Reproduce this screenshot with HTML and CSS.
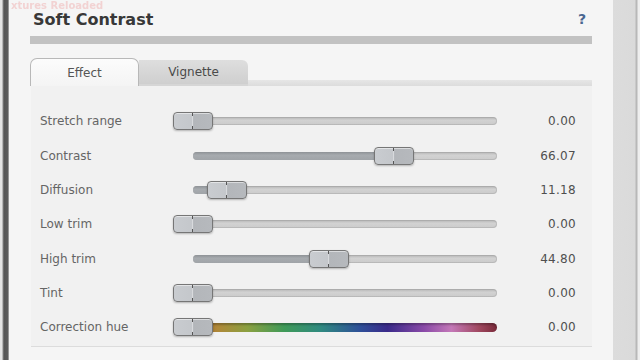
FILE: index.html
```html
<!DOCTYPE html>
<html lang="en">
<head>
  <meta charset="UTF-8">
  <title>Soft Contrast</title>
  <link rel="stylesheet" href="styles.css">
</head>
<body>

<div class="frame">
  <div class="edge-left"></div>

  <div class="dialog">
    <div class="watermark">xtures Reloaded</div>

    <!-- Title -->
    <div class="title-row">
      <h1>Soft Contrast</h1>
      <span class="help">?</span>
    </div>
    <div class="title-bar"></div>

    <!-- Tabs -->
    <div class="tabs">
      <div class="tab active">Effect</div>
      <div class="tab">Vignette</div>
      <div class="tab-line"></div>
    </div>

    <!-- Sliders -->
    <div class="panel">
      <div class="row">
        <span class="label">Stretch range</span>
        <div class="slider" style="--v:0"><div class="track"><div class="fill"></div></div><div class="knob"></div></div>
        <span class="value">0.00</span>
      </div>
      <div class="row">
        <span class="label">Contrast</span>
        <div class="slider" style="--v:66.07"><div class="track"><div class="fill"></div></div><div class="knob"></div></div>
        <span class="value">66.07</span>
      </div>
      <div class="row">
        <span class="label">Diffusion</span>
        <div class="slider" style="--v:11.18"><div class="track"><div class="fill"></div></div><div class="knob"></div></div>
        <span class="value">11.18</span>
      </div>
      <div class="row">
        <span class="label">Low trim</span>
        <div class="slider" style="--v:0"><div class="track"><div class="fill"></div></div><div class="knob"></div></div>
        <span class="value">0.00</span>
      </div>
      <div class="row">
        <span class="label">High trim</span>
        <div class="slider" style="--v:44.8"><div class="track"><div class="fill"></div></div><div class="knob"></div></div>
        <span class="value">44.80</span>
      </div>
      <div class="row">
        <span class="label">Tint</span>
        <div class="slider" style="--v:0"><div class="track"><div class="fill"></div></div><div class="knob"></div></div>
        <span class="value">0.00</span>
      </div>
      <div class="row">
        <span class="label">Correction hue</span>
        <div class="slider" style="--v:0"><div class="track hue"></div><div class="knob"></div></div>
        <span class="value">0.00</span>
      </div>
    </div>
  </div>

  <div class="edge-right"></div>
</div>

</body>
</html>
```

FILE: styles.css
```css
body {
  margin: 0;
  font-family: "DejaVu Sans", Verdana, sans-serif;
  background-color: #f5f5f5;
}

.frame {
  display: flex;
  height: 360px;
  overflow: hidden;
}

.edge-left {
  width: 9px;
  flex-shrink: 0;
  background: linear-gradient(to right, #e4e4e4 0, #e4e4e4 2px, #8a8a8a 3px, #555 4px, #5c5c5c 8px, #cfcfcf 9px);
}

.edge-right {
  width: 27px;
  flex-shrink: 0;
  background: linear-gradient(to right, #dcdcdc 0, #dadada 22px, #b8b8b8 23px, #b8b8b8 24px, #eeeeee 25px);
}

.dialog {
  position: relative;
  flex: 1;
  padding: 0 21px 0 21px;
  background-color: #f5f5f5;
}

.watermark {
  position: absolute;
  left: 2px;
  top: 0;
  font-size: 10px;
  line-height: 12px;
  font-weight: bold;
  color: rgba(235, 130, 130, 0.3);
  filter: blur(0.5px);
}

/* Title */

.title-row {
  display: flex;
  justify-content: space-between;
  align-items: center;
  height: 36px;
  padding: 3px 6px 0 3px;
  box-sizing: border-box;
}

h1 {
  margin: 0;
  font-size: 16px;
  font-weight: bold;
  color: #383838;
}

.help {
  font-size: 14px;
  font-weight: bold;
  color: #4a6690;
  margin-top: -1px;
}

.title-bar {
  height: 8px;
  background-color: #c2c2c2;
}

/* Tabs */

.tabs {
  display: flex;
  align-items: flex-end;
  height: 28px;
  margin-top: 14px;
}

.tab {
  width: 109px;
  height: 24px;
  display: flex;
  align-items: center;
  justify-content: center;
  font-size: 12px;
  color: #4a4a4a;
  background: linear-gradient(#dedede, #cfcfcf);
  border-top-right-radius: 6px;
  border-bottom: 2px solid #d6d6d6;
}

.tab.active {
  width: 107px;
  height: 27px;
  color: #555;
  background: linear-gradient(#fcfcfc, #f4f4f4);
  border: 1px solid #b8b8b8;
  border-bottom: none;
  border-radius: 7px 7px 0 0;
}

.tab-line {
  flex: 1;
  height: 6px;
  background: linear-gradient(#e6e6e6, #dcdcdc);
}

/* Slider panel */

.panel {
  padding: 18px 0 2px 0;
  background-color: #f1f1f1;
  border-bottom: 1px solid #dcdcdc;
  margin-left: 1px;
}

.row {
  display: flex;
  align-items: center;
  height: 34.35px;
}

.label {
  width: 133px;
  padding-left: 9px;
  font-size: 12px;
  color: #656565;
}

.slider {
  position: relative;
  width: 344px;
  height: 20px;
  display: flex;
  align-items: center;
}

.track {
  position: relative;
  margin: 0 20px;
  flex: 1;
  height: 8px;
  border-radius: 5px;
  overflow: hidden;
  background: linear-gradient(#b4b4b4, #d2d2d2 40%, #cbcbcb);
  box-shadow: inset 0 0 0 1px rgba(150, 150, 150, 0.35);
}

.fill {
  height: 100%;
  width: calc(var(--v) * 1%);
  background: linear-gradient(#8e9296, #a7abaf 40%, #a0a4a8);
}

.track.hue {
  height: 9px;
  background: linear-gradient(to right,
    #8a5a2a 0%, #b08838 8%, #8aa040 18%, #3f9a58 30%, #2f8a80 42%,
    #2e4f98 55%, #3a2a8a 64%, #8a4aa8 76%, #c478b8 85%, #a04860 94%, #7a2a3a 100%);
  box-shadow: inset 0 2px 2px rgba(0, 0, 0, 0.25);
}

.knob {
  position: absolute;
  top: 1px;
  left: calc(var(--v) * 3.04px);
  width: 38px;
  height: 16px;
  border: 1px solid #767676;
  border-radius: 4px;
  background: linear-gradient(to right, #c9ccd0 0, #c4c7cb 48%, #b3b6ba 52%, #b6b9bd 100%);
  box-shadow: 0 1px 2px rgba(0, 0, 0, 0.25), inset 0 1px 0 rgba(255, 255, 255, 0.5);
}

.knob::before {
  content: "";
  position: absolute;
  left: 18px;
  top: 0;
  width: 1px;
  height: 100%;
  background: linear-gradient(#555 0, #555 3px, #d8dadd 3px, #d8dadd 13px, #555 13px);
}

.value {
  width: 59px;
  text-align: right;
  font-size: 12px;
  color: #4f4f4f;
  letter-spacing: 0.3px;
}
```
